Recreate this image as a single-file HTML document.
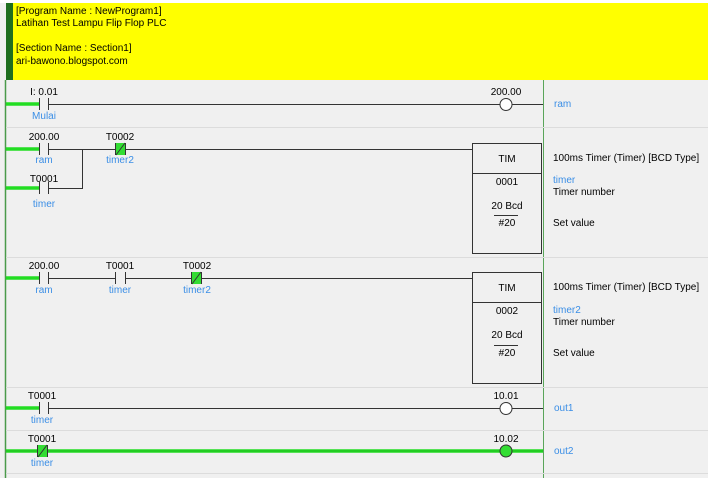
<!DOCTYPE html><html><head><style>body{margin:0;background:#f0f0f0}svg{display:block}text{font-family:"Liberation Sans",sans-serif;font-size:10px}</style></head><body>
<svg width="708" height="478" xmlns="http://www.w3.org/2000/svg">
<rect width="708" height="478" fill="#f0f0f0"/>
<rect x="0" y="0" width="708" height="3" fill="#fff"/>
<rect x="6" y="3" width="702" height="77" fill="#ffff00"/>
<rect x="6" y="3" width="7" height="77" fill="#1f6e1f"/>
<g font-size="10" fill="#000">
<text x="16" y="14">[Program Name : NewProgram1]</text>
<text x="16" y="26">Latihan Test Lampu Flip Flop PLC</text>
<text x="16" y="51">[Section Name : Section1]</text>
<text x="16" y="64">ari-bawono.blogspot.com</text>
</g>
<line x1="5.5" y1="80" x2="5.5" y2="478" stroke="#4a9a4a" stroke-width="1.5"/>
<line x1="543.5" y1="80" x2="543.5" y2="478" stroke="#5aa55a" stroke-width="1"/>
<g stroke="#dcdcdc" stroke-width="1">
<line x1="6" y1="127.5" x2="708" y2="127.5"/>
<line x1="6" y1="257.5" x2="708" y2="257.5"/>
<line x1="6" y1="387.5" x2="708" y2="387.5"/>
<line x1="6" y1="430.5" x2="708" y2="430.5"/>
<line x1="6" y1="473.5" x2="708" y2="473.5"/>
</g>
<!-- rung1 -->
<line x1="6" y1="104" x2="39" y2="104" stroke="#22dd22" stroke-width="3.5"/>
<g stroke="#333" stroke-width="1" fill="none">
<line x1="39.5" y1="98" x2="39.5" y2="110"/><line x1="48.5" y1="98" x2="48.5" y2="110"/>
<line x1="49" y1="104.5" x2="500" y2="104.5"/>
<circle cx="506" cy="104.5" r="6" fill="#fff"/>
<line x1="512" y1="104.5" x2="543" y2="104.5"/>
</g>
<text x="44" y="95" text-anchor="middle">I: 0.01</text>
<text x="44" y="119" text-anchor="middle" fill="#3a8ee6">Mulai</text>
<text x="506" y="95" text-anchor="middle">200.00</text>
<text x="554" y="107" fill="#3a8ee6">ram</text>
<!-- rung2 -->
<line x1="6" y1="149" x2="39" y2="149" stroke="#22dd22" stroke-width="3.5"/>
<line x1="6" y1="188" x2="39" y2="188" stroke="#22dd22" stroke-width="3.5"/>
<g stroke="#333" stroke-width="1" fill="none">
<line x1="39.5" y1="143" x2="39.5" y2="155"/><line x1="48.5" y1="143" x2="48.5" y2="155"/>
<line x1="39.5" y1="182" x2="39.5" y2="194"/><line x1="48.5" y1="182" x2="48.5" y2="194"/>
<line x1="49" y1="149.5" x2="115" y2="149.5"/>
<line x1="49" y1="188.5" x2="83" y2="188.5"/>
<line x1="82.5" y1="149" x2="82.5" y2="189"/>
<line x1="126" y1="149.5" x2="472" y2="149.5"/>
<rect x="472.5" y="143.5" width="69" height="110"/>
<line x1="472" y1="173.5" x2="542" y2="173.5"/>
<line x1="494" y1="215.5" x2="518" y2="215.5"/>
</g>
<rect x="115" y="143" width="11" height="12" fill="#33dd33"/>
<g stroke="#333" stroke-width="1"><line x1="115.5" y1="143" x2="115.5" y2="155"/><line x1="125.5" y1="143" x2="125.5" y2="155"/><line x1="116" y1="155" x2="125" y2="143"/></g>
<text x="44" y="140" text-anchor="middle">200.00</text>
<text x="44" y="163" text-anchor="middle" fill="#3a8ee6">ram</text>
<text x="44" y="182" text-anchor="middle">T0001</text>
<text x="44" y="207" text-anchor="middle" fill="#3a8ee6">timer</text>
<text x="120" y="140" text-anchor="middle">T0002</text>
<text x="120" y="163" text-anchor="middle" fill="#3a8ee6">timer2</text>
<text x="507" y="162" text-anchor="middle">TIM</text>
<text x="507" y="185" text-anchor="middle">0001</text>
<text x="507" y="209" text-anchor="middle">20 Bcd</text>
<text x="507" y="226" text-anchor="middle">#20</text>
<text x="553" y="161">100ms Timer (Timer) [BCD Type]</text>
<text x="553" y="183" fill="#3a8ee6">timer</text>
<text x="553" y="195">Timer number</text>
<text x="553" y="226">Set value</text>
<!-- rung3 -->
<line x1="6" y1="278" x2="39" y2="278" stroke="#22dd22" stroke-width="3.5"/>
<g stroke="#333" stroke-width="1" fill="none">
<line x1="39.5" y1="272" x2="39.5" y2="284"/><line x1="48.5" y1="272" x2="48.5" y2="284"/>
<line x1="49" y1="278.5" x2="115" y2="278.5"/>
<line x1="115.5" y1="272" x2="115.5" y2="284"/><line x1="125.5" y1="272" x2="125.5" y2="284"/>
<line x1="126" y1="278.5" x2="191" y2="278.5"/>
<line x1="202" y1="278.5" x2="472" y2="278.5"/>
<rect x="472.5" y="272.5" width="69" height="111"/>
<line x1="472" y1="302.5" x2="542" y2="302.5"/>
<line x1="494" y1="345.5" x2="518" y2="345.5"/>
</g>
<rect x="191" y="272" width="11" height="12" fill="#33dd33"/>
<g stroke="#333" stroke-width="1"><line x1="191.5" y1="272" x2="191.5" y2="284"/><line x1="201.5" y1="272" x2="201.5" y2="284"/><line x1="192" y1="284" x2="201" y2="272"/></g>
<text x="44" y="269" text-anchor="middle">200.00</text>
<text x="44" y="293" text-anchor="middle" fill="#3a8ee6">ram</text>
<text x="120" y="269" text-anchor="middle">T0001</text>
<text x="120" y="293" text-anchor="middle" fill="#3a8ee6">timer</text>
<text x="197" y="269" text-anchor="middle">T0002</text>
<text x="197" y="293" text-anchor="middle" fill="#3a8ee6">timer2</text>
<text x="507" y="291" text-anchor="middle">TIM</text>
<text x="507" y="314" text-anchor="middle">0002</text>
<text x="507" y="338" text-anchor="middle">20 Bcd</text>
<text x="507" y="356" text-anchor="middle">#20</text>
<text x="553" y="290">100ms Timer (Timer) [BCD Type]</text>
<text x="553" y="313" fill="#3a8ee6">timer2</text>
<text x="553" y="325">Timer number</text>
<text x="553" y="356">Set value</text>
<!-- rung4 -->
<line x1="6" y1="408" x2="39" y2="408" stroke="#22dd22" stroke-width="3.5"/>
<g stroke="#333" stroke-width="1" fill="none">
<line x1="39.5" y1="402" x2="39.5" y2="414"/><line x1="48.5" y1="402" x2="48.5" y2="414"/>
<line x1="49" y1="408.5" x2="500" y2="408.5"/>
<circle cx="506" cy="408.5" r="6" fill="#fff"/>
<line x1="512" y1="408.5" x2="543" y2="408.5"/>
</g>
<text x="42" y="399" text-anchor="middle">T0001</text>
<text x="42" y="423" text-anchor="middle" fill="#3a8ee6">timer</text>
<text x="506" y="399" text-anchor="middle">10.01</text>
<text x="554" y="411" fill="#3a8ee6">out1</text>
<!-- rung5 -->
<line x1="6" y1="451" x2="543" y2="451" stroke="#22dd22" stroke-width="3.5"/>
<line x1="6" y1="451" x2="543" y2="451" stroke="#229922" stroke-width="0.6"/>
<rect x="37" y="445" width="11" height="12" fill="#33dd33"/>
<g stroke="#333" stroke-width="1"><line x1="37.5" y1="445" x2="37.5" y2="457"/><line x1="47.5" y1="445" x2="47.5" y2="457"/><line x1="38" y1="457" x2="47" y2="445"/></g>
<circle cx="506" cy="451" r="6" fill="#33dd33" stroke="#333" stroke-width="1"/>
<text x="42" y="442" text-anchor="middle">T0001</text>
<text x="42" y="466" text-anchor="middle" fill="#3a8ee6">timer</text>
<text x="506" y="442" text-anchor="middle">10.02</text>
<text x="554" y="454" fill="#3a8ee6">out2</text>
</svg></body></html>
